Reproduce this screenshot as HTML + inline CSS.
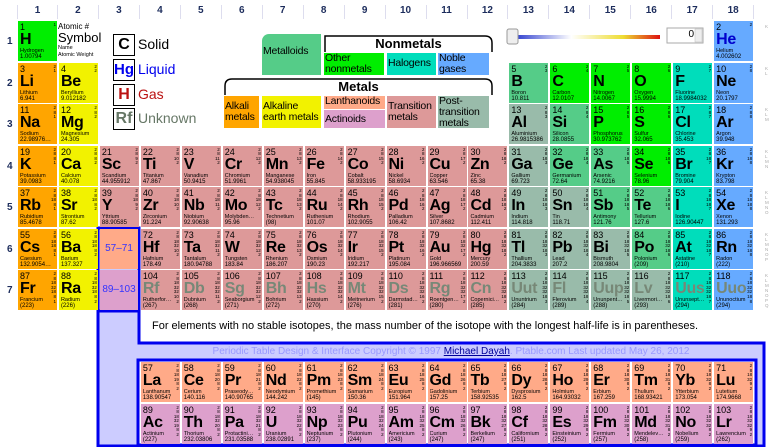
<!DOCTYPE html>
<html><head><meta charset="utf-8"><style>
*{margin:0;padding:0;box-sizing:border-box}
body{width:780px;height:447px;overflow:hidden;background:#fff;font-family:"Liberation Sans",Arial,sans-serif;position:relative}
.a{position:absolute}
.c{position:absolute;width:39px;height:40px;overflow:hidden;color:#000}
.c .n{position:absolute;left:2px;top:1px;font-size:9px}
.c .s{position:absolute;left:2px;top:10px;font-size:16px;font-weight:bold;letter-spacing:-0.3px}
.c .nm{position:absolute;left:2px;top:27px;font-size:5.5px;width:30px;white-space:nowrap;overflow:hidden;text-overflow:ellipsis}
.c .w{position:absolute;left:2px;top:33px;font-size:6px;white-space:nowrap}
.c .sh{position:absolute;right:1px;top:2px;font-size:4.5px;line-height:4.6px;text-align:right}
.hd{position:absolute;top:5px;width:41px;text-align:center;font-size:10px;font-weight:bold;color:#1c2c5c;border-right:1px solid #dde;height:14px}
.rl{position:absolute;left:7px;font-size:10px;font-weight:bold;color:#1c2c5c}
.kl{position:absolute;left:765px;font-size:4.5px;line-height:5px;color:#aaa}
.lg{position:absolute;font-size:10.5px;line-height:11px;color:#000;padding-left:1px;letter-spacing:-0.2px;overflow:hidden}
.st{position:absolute;left:113px;width:22px;height:22px;border:1px solid #000;font-weight:bold;font-size:16px;text-align:center;line-height:20px}
.stl{position:absolute;left:138px;font-size:14px}
</style></head><body>
<svg class="a" style="left:0;top:0" width="780" height="447">
<path d="M98 228 H139 V343 H764 V446 H98 Z" fill="#ccccff" stroke="#0000ee" stroke-width="3"/>
<rect x="139" y="229" width="624" height="113" fill="#fff"/>
<path d="M139 228 V343 H764" fill="none" stroke="#0000ee" stroke-width="3"/>
<rect x="138" y="360" width="618" height="85" fill="#fff" stroke="#0000ee" stroke-width="3"/>
<rect x="98" y="228" width="41" height="83" fill="none" stroke="#0000ee" stroke-width="3"/>
<path d="M225 95 V86 Q225 79 232 79 H485 Q492 79 492 86 V95" fill="none" stroke="#000" stroke-width="1.5"/>
<path d="M325 52 V36 H485 Q492 36 492 43 V52" fill="none" stroke="#000" stroke-width="1.5"/>
<defs><linearGradient id="g" x1="0" x2="1"><stop offset="0" stop-color="#2233cc"/><stop offset="0.4" stop-color="#fff"/><stop offset="0.75" stop-color="#eedd33"/><stop offset="1" stop-color="#dd1111"/></linearGradient></defs>
<rect x="512" y="35" width="148" height="4" fill="url(#g)"/>
<rect x="507" y="29" width="11" height="15" rx="2" fill="#eee" stroke="#999"/>
<rect x="667" y="28" width="36" height="15" fill="#fff" stroke="#aaa"/>
<rect x="695" y="29" width="7" height="13" fill="#eee" stroke="#bbb" stroke-width="0.5"/>
</svg>
<div class="a" style="left:680px;top:29px;font-size:10px;width:14px;text-align:right">0</div>

<div class="a" style="left:58px;top:22px;font-size:8px">Atomic #</div>
<div class="a" style="left:58px;top:30px;font-size:13px">Symbol</div>
<div class="a" style="left:58px;top:45px;font-size:5.5px">Name</div>
<div class="a" style="left:58px;top:52px;font-size:5.5px">Atomic Weight</div>

<div class="st" style="top:34px;color:#000">C</div><div class="stl" style="top:36px;color:#000">Solid</div>
<div class="st" style="top:59px;color:#0000ee;font-size:15px">Hg</div><div class="stl" style="top:61px;color:#0000ee">Liquid</div>
<div class="st" style="top:84px;color:#bb1111">H</div><div class="stl" style="top:86px;color:#bb1111">Gas</div>
<div class="st" style="top:108px;color:#667766">Rf</div><div class="stl" style="top:110px;color:#667766">Unknown</div>

<div class="lg" style="left:262px;top:34px;width:59px;height:41px;background:#55cc88;border-top-left-radius:7px;padding-top:12px">Metalloids</div>
<div class="a" style="left:325px;top:36px;width:167px;text-align:center;font-size:13px;font-weight:bold">Nonmetals</div>
<div class="lg" style="left:324px;top:53px;width:60px;height:22px;background:#00ee00">Other nonmetals</div>
<div class="lg" style="left:387px;top:53px;width:49px;height:22px;background:#00ddbb;padding-top:5px">Halogens</div>
<div class="lg" style="left:438px;top:53px;width:51px;height:22px;background:#66aaff">Noble gases</div>
<div class="a" style="left:225px;top:79px;width:267px;text-align:center;font-size:13px;font-weight:bold">Metals</div>
<div class="lg" style="left:224px;top:96px;width:35px;height:32px;background:#ffa500;padding-top:5px">Alkali metals</div>
<div class="lg" style="left:262px;top:96px;width:59px;height:32px;background:#f2f200;padding-top:5px;white-space:nowrap">Alkaline<br>earth metals</div>
<div class="lg" style="left:324px;top:96px;width:61px;height:13px;background:#ffaa88">Lanthanoids</div>
<div class="lg" style="left:324px;top:110px;width:61px;height:18px;background:#dda0cc;padding-top:4px">Actinoids</div>
<div class="lg" style="left:387px;top:96px;width:49px;height:32px;background:#dd9999;padding-top:5px">Transition metals</div>
<div class="lg" style="left:438px;top:96px;width:51px;height:32px;background:#99bbaa">Post-<br>transition metals</div>

<div class="a" style="left:152px;top:320px;font-size:11px">For elements with no stable isotopes, the mass number of the isotope with the longest half-life is in parentheses.</div>
<div class="a" style="left:140px;top:346px;width:622px;text-align:center;font-size:10px;color:#9999ff">Periodic Table Design &amp; Interface Copyright © 1997 <span style="color:#000099;text-decoration:underline">Michael Dayah</span>. Ptable.com Last updated May 26, 2012</div>

<div class="c" style="left:100px;top:229px;background:#ffaa88;width:38px;height:40px"><div style="color:#3333ff;font-size:10px;text-align:center;line-height:40px">57–71</div></div>
<div class="c" style="left:100px;top:270px;background:#dda0cc;width:38px;height:40px"><div style="color:#3333ff;font-size:10px;text-align:center;line-height:40px">89–103</div></div>

<div id="t"></div>
<script>
var S="H He Li Be B C N O F Ne Na Mg Al Si P S Cl Ar K Ca Sc Ti V Cr Mn Fe Co Ni Cu Zn Ga Ge As Se Br Kr Rb Sr Y Zr Nb Mo Tc Ru Rh Pd Ag Cd In Sn Sb Te I Xe Cs Ba La Ce Pr Nd Pm Sm Eu Gd Tb Dy Ho Er Tm Yb Lu Hf Ta W Re Os Ir Pt Au Hg Tl Pb Bi Po At Rn Fr Ra Ac Th Pa U Np Pu Am Cm Bk Cf Es Fm Md No Lr Rf Db Sg Bh Hs Mt Ds Rg Cn Uut Fl Uup Lv Uus Uuo".split(" ");
var N="Hydrogen Helium Lithium Beryllium Boron Carbon Nitrogen Oxygen Fluorine Neon Sodium Magnesium Aluminium Silicon Phosphorus Sulfur Chlorine Argon Potassium Calcium Scandium Titanium Vanadium Chromium Manganese Iron Cobalt Nickel Copper Zinc Gallium Germanium Arsenic Selenium Bromine Krypton Rubidium Strontium Yttrium Zirconium Niobium Molybdenum Technetium Ruthenium Rhodium Palladium Silver Cadmium Indium Tin Antimony Tellurium Iodine Xenon Caesium Barium Lanthanum Cerium Praseodymium Neodymium Promethium Samarium Europium Gadolinium Terbium Dysprosium Holmium Erbium Thulium Ytterbium Lutetium Hafnium Tantalum Tungsten Rhenium Osmium Iridium Platinum Gold Mercury Thallium Lead Bismuth Polonium Astatine Radon Francium Radium Actinium Thorium Protactinium Uranium Neptunium Plutonium Americium Curium Berkelium Californium Einsteinium Fermium Mendelevium Nobelium Lawrencium Rutherfordium Dubnium Seaborgium Bohrium Hassium Meitnerium Darmstadtium Roentgenium Copernicium Ununtrium Flerovium Ununpentium Livermorium Ununseptium Ununoctium".split(" ");
var W="1.00794 4.002602 6.941 9.012182 10.811 12.0107 14.0067 15.9994 18.9984032 20.1797 22.98976… 24.305 26.9815386 28.0855 30.973762 32.065 35.453 39.948 39.0983 40.078 44.955912 47.867 50.9415 51.9961 54.938045 55.845 58.933195 58.6934 63.546 65.38 69.723 72.64 74.9216 78.96 79.904 83.798 85.4678 87.62 88.90585 91.224 92.90638 95.96 (98) 101.07 102.9055 106.42 107.8682 112.411 114.818 118.71 121.76 127.6 126.90447 131.293 132.9054… 137.327 138.90547 140.116 140.90765 144.242 (145) 150.36 151.964 157.25 158.92535 162.5 164.93032 167.259 168.93421 173.054 174.9668 178.49 180.94788 183.84 186.207 190.23 192.217 195.084 196.966569 200.59 204.3833 207.2 208.9804 (209) (210) (222) (223) (226) (227) 232.03806 231.03588 238.02891 (237) (244) (243) (247) (247) (251) (252) (257) (258) (259) (262) (267) (268) (271) (272) (270) (276) (281) (280) (285) (284) (289) (288) (293) (294) (294)".split(" ");
function rep(ch,n){return Array(n+1).join(ch)}
var C="ngaemnnnhg"+"aepmnnhg"+"ae"+rep("t",10)+"pmmnhg"+"ae"+rep("t",10)+"ppmmhg"+"ae"+rep("l",15)+rep("t",9)+"pppmhg"+"ae"+rep("c",15)+rep("t",9)+"pppphg";
var COL={n:"#00ee00",g:"#66aaff",a:"#ffa500",e:"#f2f200",m:"#55cc88",h:"#00ddbb",t:"#dd9999",p:"#99bbaa",l:"#ffaa88",c:"#dda0cc"};
var ORD=[[1,2],[2,2],[2,6],[3,2],[3,6],[4,2],[3,10],[4,6],[5,2],[4,10],[5,6],[6,2],[4,14],[5,10],[6,6],[7,2],[5,14],[6,10],[7,6]];
function shells(z){var s=[0,0,0,0,0,0,0,0],r=z;for(var i=0;i<ORD.length&&r>0;i++){var k=Math.min(r,ORD[i][1]);s[ORD[i][0]]+=k;r-=k;}var o=[];for(var n=1;n<8;n++)if(s[n])o.push(s[n]);return o;}
function pos(z){
 if(z==1)return[1,1];if(z==2)return[1,18];
 if(z<=10)return[2,z<=4?z-2:z+8];
 if(z<=18)return[3,z<=12?z-10:z];
 if(z<=36)return[4,z-18];if(z<=54)return[5,z-36];
 if(z<=56)return[6,z-54];if(z<=71)return[8,z-53];if(z<=86)return[6,z-68];
 if(z<=88)return[7,z-86];if(z<=103)return[9,z-85];return[7,z-100];}
var h="";
for(var c=1;c<=18;c++)h+='<div class="hd" style="left:'+(17+(c-1)*40.95)+'px;'+(c==1?'border-left:1px solid #dde;':'')+'">'+c+'</div>';
for(var r=1;r<=7;r++)h+='<div class="rl" style="top:'+(36+(r-1)*41.5)+'px">'+r+'</div>';
var KL="KLMNOPQ";
for(var r=1;r<=7;r++)h+='<div class="kl" style="top:'+(24+(r-1)*41.5)+'px">'+KL.slice(0,r).split("").join("<br>")+'</div>';
for(var z=1;z<=118;z++){
 var p=pos(z),x=18+(p[1]-1)*40.95,y=p[0]<=7?21+(p[0]-1)*41.5:(p[0]==8?362:403.5);
 var col=z==2?"#0000cc":(z>=104?"#778877":"#000");
 h+='<div class="c" style="left:'+x+'px;top:'+y+'px;background:'+COL[C[z-1]]+'"><span class="n">'+z+'</span><span class="sh">'+shells(z).join("<br>")+'</span><span class="s" style="color:'+col+'">'+S[z-1]+'</span><span class="nm">'+N[z-1]+'</span><span class="w">'+W[z-1]+'</span></div>';
}
document.getElementById("t").innerHTML=h;
</script>
</body></html>
